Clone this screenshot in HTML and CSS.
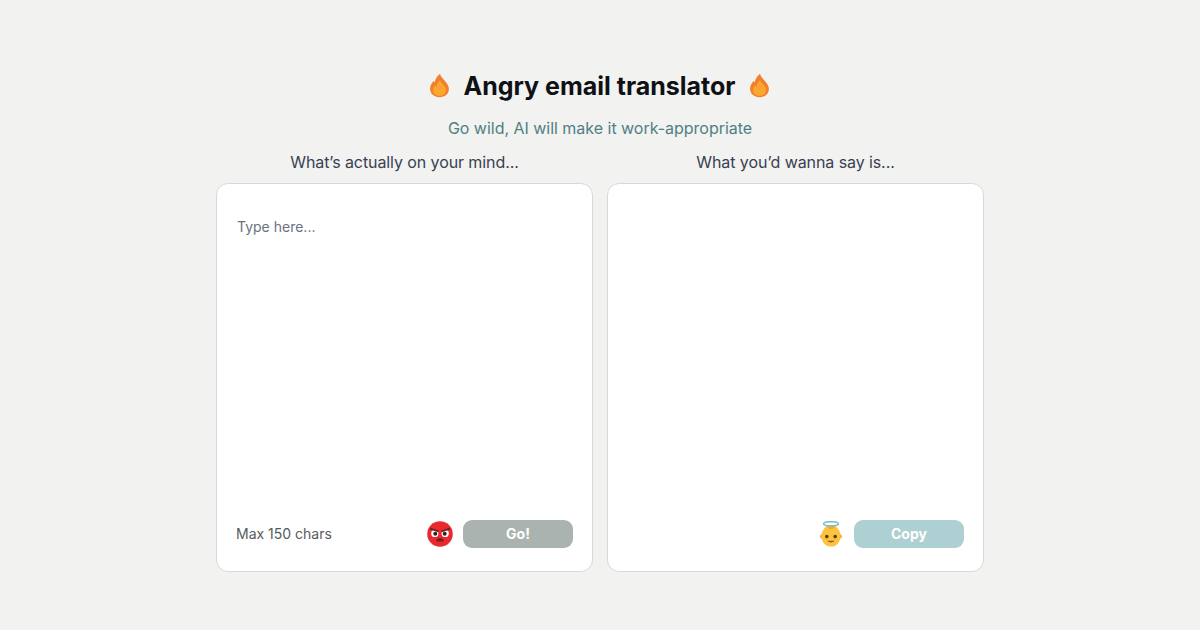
FILE: index.html
```html
<!DOCTYPE html>
<html lang="en">
<head>
    <meta charset="UTF-8">
    <meta name="viewport" content="width=device-width, initial-scale=1.0">
    <title>Angry email translator</title>
    <link rel="stylesheet" href="styles.css">
</head>
<body>
    <main class="page">
        <header class="page-header">
            <h1 class="title">
                <svg class="flame" viewBox="0 0 20 25" aria-hidden="true">
                    <path fill="#f0802c" d="M10.6 0.2C10.8 3 13.8 5.2 16.4 8.6C18.6 11.4 19.9 13.8 19.9 16.2C19.9 21.4 15.6 24.8 10 24.8C4.4 24.8 0.1 21.4 0.1 16C0.1 12.6 1.8 10 3.6 7.8C4 8.4 4.4 8.8 5 9C5.6 5.6 7.6 2.6 10.6 0.2Z"/>
                    <path fill="#fba62e" d="M10.4 7C11.4 10 16.8 12.8 16.8 17.6C16.8 21.2 13.8 23.4 10 23.4C6.2 23.4 3.2 21.2 3.2 17.6C3.2 15.2 4.4 13.4 5.8 12.2C6 13 6.4 13.4 7 13.6C7.2 11.2 8.4 8.8 10.4 7Z"/>
                </svg>
                <span>Angry email translator</span>
                <svg class="flame" viewBox="0 0 20 25" aria-hidden="true">
                    <path fill="#f0802c" d="M10.6 0.2C10.8 3 13.8 5.2 16.4 8.6C18.6 11.4 19.9 13.8 19.9 16.2C19.9 21.4 15.6 24.8 10 24.8C4.4 24.8 0.1 21.4 0.1 16C0.1 12.6 1.8 10 3.6 7.8C4 8.4 4.4 8.8 5 9C5.6 5.6 7.6 2.6 10.6 0.2Z"/>
                    <path fill="#fba62e" d="M10.4 7C11.4 10 16.8 12.8 16.8 17.6C16.8 21.2 13.8 23.4 10 23.4C6.2 23.4 3.2 21.2 3.2 17.6C3.2 15.2 4.4 13.4 5.8 12.2C6 13 6.4 13.4 7 13.6C7.2 11.2 8.4 8.8 10.4 7Z"/>
                </svg>
            </h1>
            <p class="subtitle">Go wild, AI will make it work-appropriate</p>
        </header>

        <div class="columns">
            <section class="column">
                <h2 class="column-label">What’s actually on your mind...</h2>
                <div class="panel">
                    <div class="placeholder">Type here...</div>
                    <div class="panel-footer">
                        <span class="hint">Max 150 chars</span>
                        <svg class="emoji" viewBox="0 0 26 26" aria-hidden="true">
                            <circle cx="13" cy="13" r="12.8" fill="#e8292e"/>
                            <circle cx="7.8" cy="12.4" r="3.6" fill="#fff"/>
                            <circle cx="18.2" cy="12.4" r="3.6" fill="#fff"/>
                            <circle cx="8.3" cy="12.8" r="2" fill="#35202a"/>
                            <circle cx="17.7" cy="12.8" r="2" fill="#35202a"/>
                            <path d="M3.8 7.8L10.8 10.2M22.2 7.8L15.2 10.2" stroke="#7a1c20" stroke-width="1.8" stroke-linecap="round"/>
                            <path d="M9.2 20.6C9.6 17.8 11 17 13 17C15 17 16.4 17.8 16.8 20.6Z" fill="#7a1c20"/>
                        </svg>
                        <button class="btn btn-go" disabled>Go!</button>
                    </div>
                </div>
            </section>

            <section class="column">
                <h2 class="column-label">What you’d wanna say is...</h2>
                <div class="panel">
                    <div class="output"></div>
                    <div class="panel-footer">
                        <svg class="emoji" viewBox="0 0 26 26" aria-hidden="true">
                            <circle cx="4.2" cy="15.4" r="2.2" fill="#f6a92e"/>
                            <circle cx="21.8" cy="15.4" r="2.2" fill="#f6a92e"/>
                            <path d="M13 4.6C19 4.6 22.4 9.4 22.4 15.2C22.4 21.6 18.4 25.6 13 25.6C7.6 25.6 3.6 21.6 3.6 15.2C3.6 9.4 7 4.6 13 4.6Z" fill="#fcc43e"/>
                            <path d="M8.6 5.6C10.2 9 15.8 9 17.4 5.6L13 4.2Z" fill="#f5ab30"/>
                            <ellipse cx="13" cy="2.8" rx="7.4" ry="2.1" fill="none" stroke="#7dbcc0" stroke-width="1.5"/>
                            <circle cx="8.8" cy="15.6" r="1.8" fill="#5a3a1c"/>
                            <circle cx="17.2" cy="15.6" r="1.8" fill="#5a3a1c"/>
                            <path d="M9.4 19.8C11 22 15 22 16.6 19.8Z" fill="#a4521f"/>
                        </svg>
                        <button class="btn btn-copy" disabled>Copy</button>
                    </div>
                </div>
            </section>
        </div>
    </main>
</body>
</html>
```

FILE: styles.css
```css
* {
    margin: 0;
    padding: 0;
    box-sizing: border-box;
}

body {
    font-family: Inter, 'Noto Sans', sans-serif;
    background-color: #f2f2f1;
    min-height: 100vh;
}

.page {
    width: 768px;
    margin: 0 auto;
    padding-top: 68px;
}

.page-header {
    text-align: center;
}

.title {
    display: flex;
    justify-content: center;
    align-items: center;
    gap: 14px;
    height: 35px;
    padding-right: 1px;
    font-size: 25px;
    font-weight: 700;
    color: #0f1114;
}

.flame {
    width: 19px;
    height: 25px;
}

.subtitle {
    margin-top: 15px;
    font-size: 16px;
    line-height: 20px;
    letter-spacing: -0.02px;
    color: #4f8084;
}

.columns {
    display: flex;
    gap: 14px;
    margin-top: 14px;
}

.column {
    flex: 1;
    display: flex;
    flex-direction: column;
}

.column-label {
    font-size: 16px;
    font-weight: 400;
    line-height: 20px;
    letter-spacing: -0.09px;
    text-align: center;
    color: #374151;
    margin-bottom: 11px;
}

.panel {
    height: 389px;
    background-color: #fff;
    border: 1px solid #d6d8da;
    border-radius: 12px;
    display: flex;
    flex-direction: column;
    padding: 34px 19px 23px 19px;
}

.placeholder {
    flex: 1;
    padding-left: 1px;
    font-size: 14px;
    line-height: 17px;
    color: #6b7280;
}

.output {
    flex: 1;
}

.panel-footer {
    display: flex;
    align-items: center;
    justify-content: flex-end;
    gap: 10px;
}

.hint {
    margin-right: auto;
    margin-bottom: 1px;
    font-size: 14px;
    color: #555b60;
}

.emoji {
    width: 26px;
    height: 26px;
}

.btn {
    width: 110px;
    height: 28px;
    padding-bottom: 2px;
    border: none;
    border-radius: 9px;
    font-family: inherit;
    font-size: 14px;
    font-weight: 700;
    color: #fff;
}

.btn-go {
    background-color: #abb3b1;
}

.btn-copy {
    background-color: #add0d2;
}
```
